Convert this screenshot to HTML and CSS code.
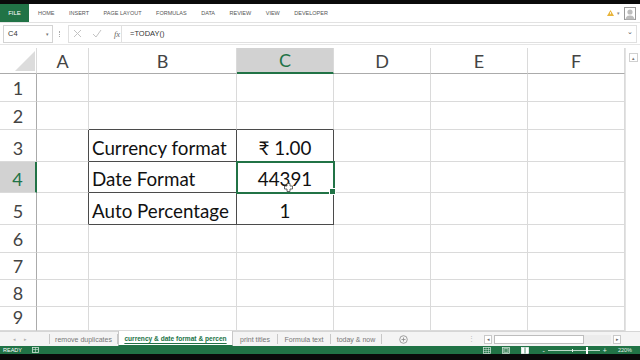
FILE: index.html
```html
<!DOCTYPE html>
<html>
<head>
<meta charset="utf-8">
<link rel="stylesheet" href="styles.css">
</head>
<body>
<div class="app">
  <div class="blackbar"></div>
  <div class="ribbon">
    <div class="file">FILE</div>
    <nav class="tabs">
      <span>HOME</span><span>INSERT</span><span>PAGE LAYOUT</span><span>FORMULAS</span><span>DATA</span><span>REVIEW</span><span>VIEW</span><span>DEVELOPER</span>
    </nav>
    <div class="account">
      <svg width="7" height="6" viewBox="0 0 7 6"><path d="M3.5 0 L7 6 L0 6 Z" fill="#e8b43a"/><rect x="3.1" y="2" width="0.8" height="2.2" fill="#fff"/></svg>
      <span class="caret">▾</span>
      <svg class="avatar" width="12" height="13" viewBox="0 0 12 13"><rect x="0.5" y="0.5" width="11" height="12" fill="#fff" stroke="#9a9a9a"/><circle cx="6" cy="5" r="2.6" fill="#bdbdbd"/><path d="M1.5 12.5 C2 9 4 8.5 6 8.5 C8 8.5 10 9 10.5 12.5 Z" fill="#bdbdbd"/></svg>
    </div>
  </div>
  <div class="fbar">
    <div class="namebox"><span>C4</span><span class="nb-dd">▾</span></div>
    <div class="vsep"></div>
    <div class="fxbtns">
      <svg width="9" height="9" viewBox="0 0 9 9"><path d="M1 1 L8 8 M8 1 L1 8" stroke="#c3c3c3" stroke-width="1"/></svg>
      <svg width="10" height="9" viewBox="0 0 10 9"><path d="M1 5 L4 8 L9 1" stroke="#c3c3c3" stroke-width="1" fill="none"/></svg>
      <span class="fx">fx</span>
    </div>
    <div class="finput"><span>=TODAY()</span><span class="chev">⌄</span></div>
  </div>
  <div class="sheet">
    <div class="grid">
      <div class="corner"><svg width="20" height="20" viewBox="0 0 20 20"><path d="M20 0 L20 20 L0 20 Z" fill="#dcdcdc"/></svg></div>
      <div class="ch">A</div><div class="ch">B</div><div class="ch sel">C</div><div class="ch">D</div><div class="ch">E</div><div class="ch">F</div>

      <div class="rh">1</div><div class="c"></div><div class="c"></div><div class="c"></div><div class="c"></div><div class="c"></div><div class="c"></div>
      <div class="rh">2</div><div class="c"></div><div class="c tt"></div><div class="c tt"></div><div class="c"></div><div class="c"></div><div class="c"></div>
      <div class="rh">3</div><div class="c tl"></div><div class="c tb">Currency format</div><div class="c tb ctr">₹ 1.00</div><div class="c"></div><div class="c"></div><div class="c"></div>
      <div class="rh sel">4</div><div class="c tl"></div><div class="c tb">Date Format</div><div class="c tb ctr active">44391<svg class="cursor" width="9" height="9" viewBox="0 0 9 9"><path d="M3 0.5 H6 V3 H8.5 V6 H6 V8.5 H3 V6 H0.5 V3 H3 Z" fill="#fff" stroke="#444" stroke-width="0.8"/></svg></div><div class="c"></div><div class="c"></div><div class="c"></div>
      <div class="rh">5</div><div class="c tl"></div><div class="c tb">Auto Percentage</div><div class="c tb ctr">1</div><div class="c"></div><div class="c"></div><div class="c"></div>
      <div class="rh">6</div><div class="c"></div><div class="c"></div><div class="c"></div><div class="c"></div><div class="c"></div><div class="c"></div>
      <div class="rh">7</div><div class="c"></div><div class="c"></div><div class="c"></div><div class="c"></div><div class="c"></div><div class="c"></div>
      <div class="rh">8</div><div class="c"></div><div class="c"></div><div class="c"></div><div class="c"></div><div class="c"></div><div class="c"></div>
      <div class="rh">9</div><div class="c"></div><div class="c"></div><div class="c"></div><div class="c"></div><div class="c"></div><div class="c"></div>
    </div>
    <div class="vscroll"><div class="sbtn">▴</div></div>
  </div>
  <div class="tabbar">
    <div class="navs"><span>◂</span><span>▸</span></div>
    <div class="stab w68">remove duplicates</div>
    <div class="stab active w115">currency &amp; date format &amp; percen</div>
    <div class="stab w45">print titles</div>
    <div class="stab w53">Formula text</div>
    <div class="stab w51">today &amp; now</div>
    <div class="addtab"><svg width="9" height="9" viewBox="0 0 9 9"><circle cx="4.5" cy="4.5" r="3.8" fill="none" stroke="#8a8a8a" stroke-width="0.8"/><path d="M4.5 2.5 V6.5 M2.5 4.5 H6.5" stroke="#8a8a8a" stroke-width="0.8"/></svg></div>
    <div class="dots">⋮</div>
    <div class="hscroll">
      <div class="hbtn">◂</div>
      <div class="hthumb"></div>
      <div class="htrack"></div>
      <div class="hbtn">▸</div>
    </div>
  </div>
  <div class="status">
    <span class="ready">READY</span>
    <svg class="macro" width="7" height="6" viewBox="0 0 7 6"><rect x="0.5" y="0.5" width="6" height="5" fill="none" stroke="#cfe5d8" stroke-width="0.8"/><path d="M0.5 2.5 H6.5 M3.5 0.5 V5.5" stroke="#cfe5d8" stroke-width="0.6"/></svg>
    <div class="sright">
      <svg width="8" height="7" viewBox="0 0 8 7"><rect x="0.5" y="0.5" width="7" height="6" fill="none" stroke="#d9ebe0" stroke-width="0.7"/><path d="M0.5 2.5 H7.5 M0.5 4.5 H7.5 M3 0.5 V6.5 M5.5 0.5 V6.5" stroke="#d9ebe0" stroke-width="0.5"/></svg>
      <svg width="8" height="7" viewBox="0 0 8 7"><rect x="0.5" y="0.5" width="7" height="6" fill="#4f8f6a" stroke="#d9ebe0" stroke-width="0.7"/><rect x="2" y="1.8" width="4" height="3.4" fill="none" stroke="#d9ebe0" stroke-width="0.5"/></svg>
      <svg width="8" height="7" viewBox="0 0 8 7"><rect x="0.5" y="0.5" width="7" height="6" fill="#fff" stroke="#fff" stroke-width="0.7"/><path d="M4 0.5 V6.5" stroke="#217346" stroke-width="0.8"/></svg>
      <div class="zoomctl">
        <span class="zm">-</span>
        <div class="zline"><div class="ztick"></div><div class="zthumb"></div></div>
        <span class="zm">+</span>
      </div>
      <span class="zpct">220%</span>
    </div>
  </div>
  <div class="blackbar bottom"></div>
</div>
</body>
</html>
```
FILE: styles.css
```css
* { box-sizing: border-box; }
html, body { margin: 0; padding: 0; }
body { width: 640px; height: 360px; overflow: hidden; background: #000; font-family: "Liberation Sans", Arial, sans-serif; }
.app { width: 640px; height: 360px; display: flex; flex-direction: column; background: #fff; }
.blackbar { height: 4px; background: #0a0a0a; flex: none; }
.blackbar.bottom { height: 6px; }

.ribbon { height: 19px; display: flex; align-items: stretch; background: #fff; border-bottom: 1px solid #e2e2e2; flex: none; }
.file { width: 29px; background: #217346; color: #fff; font-size: 6px; display: flex; align-items: center; justify-content: center; }
.tabs { display: flex; align-items: center; gap: 14.5px; padding-left: 9px; font-size: 5.5px; color: #555; }
.account { margin-left: auto; display: flex; align-items: center; gap: 3px; padding-right: 4px; }
.caret { font-size: 5px; color: #888; }
.avatar { margin-left: 1px; }

.fbar { height: 22px; display: flex; align-items: center; padding: 0 3px; gap: 0; flex: none; border-bottom: 1px solid #e6e6e6; }
.namebox { width: 50px; height: 18px; border: 1px solid #d3d3d3; display: flex; align-items: center; justify-content: space-between; padding: 0 3px 0 4px; font-size: 7.5px; color: #333; }
.nb-dd { font-size: 5px; color: #777; }
.vsep { width: 1px; height: 6px; margin: 0 8px 0 6px; border-left: 1px dotted #aaa; }
.fxbtns { width: 54px; height: 18px; border: 1px solid #e0e0e0; display: flex; align-items: center; gap: 10px; padding-left: 4px; }
.fx { font-family: "Liberation Serif", serif; font-style: italic; font-size: 8.5px; color: #666; margin-left: 2px; }
.finput { flex: 1; height: 18px; border: 1px solid #e0e0e0; border-left: none; display: flex; align-items: center; justify-content: space-between; padding: 0 3px 0 8px; font-size: 7.5px; color: #333; }
.chev { font-size: 7px; color: #555; line-height: 1; margin-top: -4px; }

.sheet { margin-top: 3px; height: 283px; display: flex; flex: none; overflow: hidden; }
.grid { width: 625px; display: grid; grid-template-columns: 37px 52px 148px 97px 97px 97px 97px; grid-template-rows: 26px 28px 28px 32px 31px 32px 28px 27px 27px 24px; font-family: Lato, "Open Sans", sans-serif; }
.grid > div { border-right: 1px solid #dadada; border-bottom: 1px solid #dadada; display: flex; align-items: flex-end; line-height: 22px; padding-bottom: 2px; }
.grid > .corner { justify-content: flex-end; padding: 0 1px 2px 0; border-bottom-color: #ababab; }
.grid > .ch { justify-content: center; align-items: center; padding-bottom: 0; font-size: 18px; color: #444; border-bottom-color: #ababab; }
.grid > .ch.sel { background: #d2d2d2; color: #217346; border-bottom: 2px solid #217346; }
.grid > .rh { justify-content: center; font-size: 18px; color: #444; border-right-color: #ababab; }
.grid > .rh.sel { background: #d2d2d2; color: #217346; border-right: 2px solid #217346; }
.grid > .c { font-size: 18.8px; color: #111; padding-left: 3px; }
.grid > .c.tt { border-bottom-color: #4b4b4b; }
.grid > .c.tl { border-right-color: #4b4b4b; }
.grid > .c.tb { border-right-color: #4b4b4b; border-bottom-color: #4b4b4b; }
.grid > .c.ctr { justify-content: center; padding-left: 0; }
.grid > .c.active { position: relative; outline: 2px solid #217346; outline-offset: -1px; z-index: 1; }
.c.active::after { content: ""; position: absolute; right: -3px; bottom: -3px; width: 5px; height: 5px; background: #217346; border: 1px solid #fff; }
.cursor { position: absolute; left: 47px; top: 21px; }
.vscroll { width: 15px; border-left: 1px solid #e3e3e3; background: #fff; display: flex; flex-direction: column; align-items: center; padding-top: 5px; }
.sbtn { width: 9px; height: 9px; border: 1px solid #d0d0d0; font-size: 5px; color: #777; display: flex; align-items: center; justify-content: center; }

.tabbar { height: 15px; display: flex; align-items: stretch; background: #f4f4f4; border-top: 1px solid #d6d6d6; flex: none; font-size: 7px; color: #777; }
.navs { width: 50px; display: flex; align-items: center; gap: 8px; padding-left: 13px; font-size: 5px; color: #b0b0b0; border-right: 1px solid #c8c8c8; margin: 2px 0; }
.stab { display: flex; align-items: center; justify-content: center; border-right: 1px solid #c8c8c8; margin: 2px 0; white-space: nowrap; }
.stab.active { background: #fff; color: #217346; font-weight: bold; border-bottom: 1px solid #217346; margin: -1px 0 0; text-decoration: underline; text-decoration-thickness: 0.5px; text-underline-offset: 1.5px; border-left: 1px solid #c8c8c8; border-right: 1px solid #c8c8c8; }
.w68 { width: 68px; }
.w115 { width: 115px; font-size: 6.6px; }
.w45 { width: 45px; }
.w53 { width: 53px; }
.w51 { width: 51px; }
.addtab { width: 42px; display: flex; align-items: center; justify-content: center; }
.dots { width: 60px; display: flex; align-items: center; justify-content: flex-end; padding-right: 9px; color: #bbb; font-size: 7px; }
.hscroll { width: 137px; display: flex; align-items: center; gap: 0; }
.hbtn { width: 8px; height: 9px; border: 1px solid #c9c9c9; background: #fff; font-size: 5px; color: #666; display: flex; align-items: center; justify-content: center; }
.hthumb { width: 90px; height: 9px; border: 1px solid #bdbdbd; background: #fff; margin-left: 2px; }
.htrack { flex: 1; height: 9px; background: #ececec; margin-right: 2px; }

.status { height: 8px; background: #217346; display: flex; align-items: center; padding-left: 3px; flex: none; color: #fff; }
.ready { font-size: 5.5px; }
.macro { margin-left: 10px; }
.sright { margin-left: auto; display: flex; align-items: center; gap: 11px; padding-right: 8px; }
.zoomctl { display: flex; align-items: center; gap: 3px; margin-left: 2px; }
.zm { font-size: 7px; line-height: 1; color: #e4f0e9; }
.zline { position: relative; width: 52px; height: 1px; background: #bcd8c7; }
.ztick { position: absolute; left: 24px; top: -1px; width: 1px; height: 3px; background: #e4f0e9; }
.zthumb { position: absolute; left: 38px; top: -3px; width: 2px; height: 7px; background: #fff; }
.zpct { font-size: 5.5px; color: #e4f0e9; }
```
